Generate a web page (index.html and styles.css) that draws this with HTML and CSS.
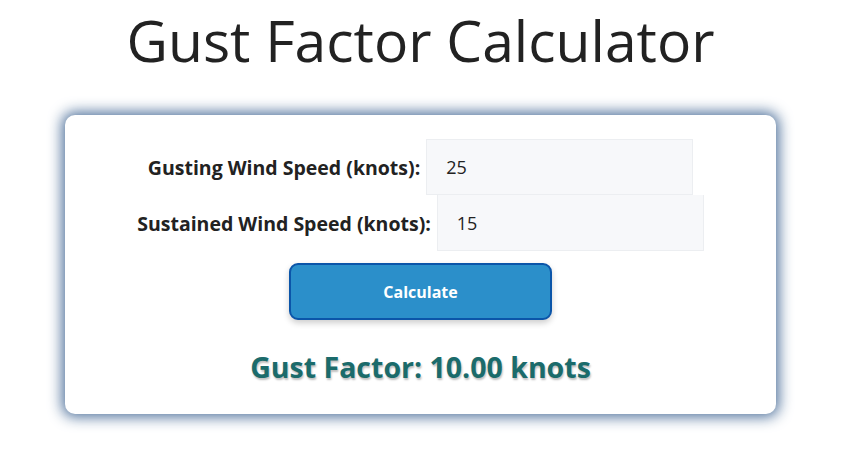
FILE: index.html
```html
<!DOCTYPE html>
<html lang="en">
<head>
  <meta charset="UTF-8">
  <meta name="viewport" content="width=device-width, initial-scale=1.0">
  <title>Gust Factor Calculator</title>
  <link rel="stylesheet" href="styles.css">
</head>
<body>
  <h1>Gust Factor Calculator</h1>
  <div class="card">
    <div class="row">
      <label for="gust">Gusting Wind Speed (knots):</label>
      <input type="number" id="gust" value="25">
    </div>
    <div class="row">
      <label for="sustained">Sustained Wind Speed (knots):</label>
      <input type="number" id="sustained" value="15">
    </div>
    <button onclick="calculate()">Calculate</button>
    <div class="result" id="result">Gust Factor: 10.00 knots</div>
  </div>

  <script>
    function calculate() {
      const gust = parseFloat(document.getElementById('gust').value);
      const sustained = parseFloat(document.getElementById('sustained').value);
      if (isNaN(gust) || isNaN(sustained)) {
        document.getElementById('result').innerText = "Please enter valid numbers";
        return;
      }
      const factor = gust - sustained;
      document.getElementById('result').innerText = `Gust Factor: ${factor.toFixed(2)} knots`;
    }
  </script>
</body>
</html>
```

FILE: styles.css
```css
body {
  margin: 0;
  padding: 0 73px 48px 65px;
  background: #fff;
  color: #222;
  font-family: "Open Sans", "Noto Sans", sans-serif;
  text-align: center;
}
h1 {
  font-size: 57px;
  font-weight: 400;
  margin: 7px 0 41px;
  line-height: 67px;
  color: #222;
}
.card {
  background: #fff;
  border-radius: 10px;
  box-shadow: 0 0 14px 3px rgba(70, 105, 150, 0.95);
  padding: 24px 20px 28px;
}
.row {
  display: flex;
  justify-content: center;
  align-items: center;
}
.row label {
  font-weight: bold;
  font-size: 19.5px;
  color: #222;
  margin-right: 6px;
}
.row input {
  width: 267px;
  height: 56px;
  box-sizing: border-box;
  border: 1px solid #eceef1;
  background: #f7f8fa;
  padding: 0 19px;
  font-family: inherit;
  font-size: 18px;
  color: #222;
  outline: none;
  -moz-appearance: textfield;
}
.row input::-webkit-inner-spin-button,
.row input::-webkit-outer-spin-button {
  -webkit-appearance: none;
  margin: 0;
}
.row + .row input {
  border-top: none;
}
button {
  display: block;
  margin: 12px auto 0;
  width: 263px;
  height: 57px;
  background: #2b8fca;
  border: 2px solid #0b55a9;
  border-radius: 9px;
  color: #fff;
  font-family: inherit;
  font-weight: bold;
  font-size: 16px;
  cursor: pointer;
  box-shadow: 0 3px 6px rgba(0, 0, 0, 0.2);
}
button:hover {
  background: #2580b6;
}
.result {
  margin-top: 28px;
  font-size: 28.5px;
  font-weight: bold;
  color: #1b6b6b;
  text-shadow: 1px 2px 2px rgba(0, 0, 0, 0.25);
}
```
